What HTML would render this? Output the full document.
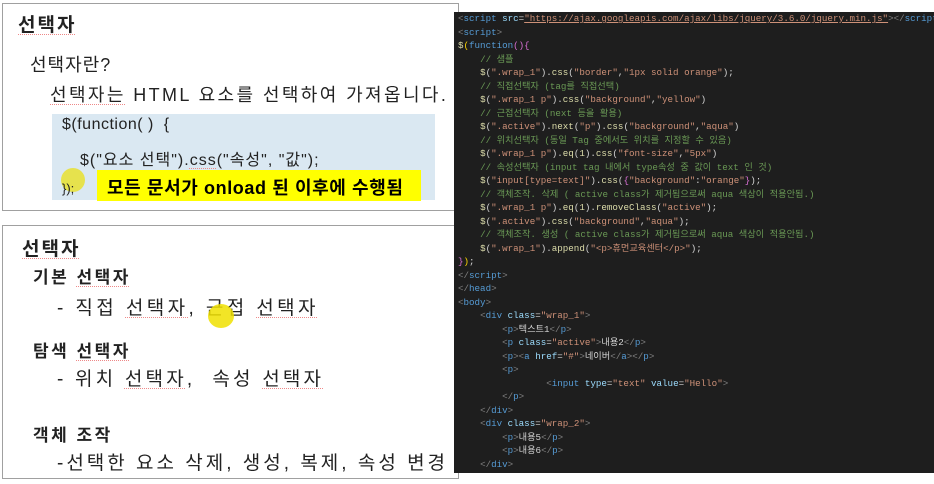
<!DOCTYPE html>
<html><head><meta charset="utf-8"><style>
body{margin:0;width:934px;height:484px;background:#fff;position:relative;overflow:hidden;font-family:"Liberation Sans","Noto Sans CJK KR",sans-serif;color:#222}
.box{position:absolute;border:1.5px solid #a0a0a0;background:#fff}
.t{position:absolute;white-space:nowrap}
.b{font-weight:bold}
.u{text-decoration:underline dotted #e88;text-decoration-thickness:1px;text-underline-offset:3px}
#code{position:absolute;left:454px;top:12px;width:480px;height:461px;background:#1e1e1e;overflow:hidden}
#code pre{margin:0;position:absolute;left:4px;top:0;font-family:"Liberation Mono","Noto Sans CJK KR",monospace;font-size:9.2px;line-height:13.5px;color:#d4d4d4}
.g{color:#808080}.k{color:#569cd6}.a{color:#9cdcfe}.s{color:#ce9178}.c{color:#6a9955}.f{color:#dcdcaa}.y{color:#ffd700}.p{color:#da70d6}.w{color:#d4d4d4}
</style></head><body>
<div class="box" style="left:2px;top:3px;width:455px;height:206px"></div>
<div class="t b" style="left:18px;top:10px;font-size:19px;letter-spacing:2px"><span class="u">선택자</span></div>
<div class="t" style="left:30px;top:51px;font-size:18px;letter-spacing:1px">선택자란?</div>
<div class="t" style="left:50px;top:81px;font-size:18px;letter-spacing:2.4px"><span class="u">선택자는</span> HTML 요소를 선택하여 가져옵니다.</div>
<div style="position:absolute;left:52px;top:114px;width:383px;height:86px;background:#dae8f2"></div>
<div class="t" style="left:62px;top:116px;font-size:16px;letter-spacing:0.5px">$(function( )&nbsp; {</div>
<div class="t" style="left:80px;top:146px;font-size:16px;letter-spacing:1px">$("요소 선택").<span class="u">css</span>("속성", "값");</div>
<div style="position:absolute;left:61px;top:168px;width:24px;height:24px;border-radius:50%;background:#e8e030;opacity:.85"></div>
<div class="t" style="left:62px;top:181px;font-size:13px">});</div>
<div style="position:absolute;left:97px;top:170px;width:324px;height:31px;background:#ffff00"></div>
<div class="t b" style="left:107px;top:174px;font-size:18px;letter-spacing:0.6px;color:#000">모든 문서가 onload 된 이후에 수행됨</div>

<div class="box" style="left:2px;top:225px;width:455px;height:252px"></div>
<div class="t b" style="left:22px;top:234px;font-size:19px;letter-spacing:2px"><span class="u">선택자</span></div>
<div class="t b" style="left:33px;top:263px;font-size:17px;letter-spacing:2.5px">기본 <span class="u">선택자</span></div>
<div class="t" style="left:57px;top:293px;font-size:19px;letter-spacing:3.4px">- 직접 <span class="u">선택자</span>, 근접 <span class="u">선택자</span></div>
<div style="position:absolute;left:208px;top:304px;width:26px;height:24px;border-radius:50%;background:#f0e000;opacity:.85"></div>
<div class="t b" style="left:33px;top:337px;font-size:17px;letter-spacing:2.5px">탐색 <span class="u">선택자</span></div>
<div class="t" style="left:57px;top:364px;font-size:19px;letter-spacing:3.2px">- 위치 <span class="u">선택자</span>,&nbsp; 속성 <span class="u">선택자</span></div>
<div class="t b" style="left:33px;top:421px;font-size:17px;letter-spacing:2.5px">객체 조작</div>
<div class="t" style="left:57px;top:448px;font-size:19px;letter-spacing:3px">-선택한 요소 삭제, 생성, 복제, 속성 변경</div>

<div id="code"><pre><span class="g">&lt;</span><span class="k">script</span> <span class="a">src</span>=<span class="s" style="text-decoration:underline">"https://ajax.googleapis.com/ajax/libs/jquery/3.6.0/jquery.min.js"</span><span class="g">&gt;&lt;/</span><span class="k">script</span><span class="g">&gt;</span>
<span class="g">&lt;</span><span class="k">script</span><span class="g">&gt;</span>
<span class="f">$</span><span class="y">(</span><span class="k">function</span><span class="p">(){</span>
    <span class="c">// 샘플</span>
    <span class="f">$</span>(<span class="s">".wrap_1"</span>).<span class="f">css</span>(<span class="s">"border"</span>,<span class="s">"1px solid orange"</span>);
    <span class="c">// 직접선택자 (tag를 직접선택)</span>
    <span class="f">$</span>(<span class="s">".wrap_1 p"</span>).<span class="f">css</span>(<span class="s">"background"</span>,<span class="s">"yellow"</span>)
    <span class="c">// 근접선택자 (next 등을 활용)</span>
    <span class="f">$</span>(<span class="s">".active"</span>).<span class="f">next</span>(<span class="s">"p"</span>).<span class="f">css</span>(<span class="s">"background"</span>,<span class="s">"aqua"</span>)
    <span class="c">// 위치선택자 (동일 Tag 중에서도 위치를 지정할 수 있음)</span>
    <span class="f">$</span>(<span class="s">".wrap_1 p"</span>).<span class="f">eq</span>(<span class="f">1</span>).<span class="f">css</span>(<span class="s">"font-size"</span>,<span class="s">"5px"</span>)
    <span class="c">// 속성선택자 (input tag 내에서 type속성 중 값이 text 인 것)</span>
    <span class="f">$</span>(<span class="s">"input[type=text]"</span>).<span class="f">css</span>(<span class="p">{</span><span class="s">"background"</span>:<span class="s">"orange"</span><span class="p">}</span>);
    <span class="c">// 객체조작. 삭제 ( active class가 제거됨으로써 aqua 색상이 적용안됨.)</span>
    <span class="f">$</span>(<span class="s">".wrap_1 p"</span>).<span class="f">eq</span>(<span class="f">1</span>).<span class="f">removeClass</span>(<span class="s">"active"</span>);
    <span class="f">$</span>(<span class="s">".active"</span>).<span class="f">css</span>(<span class="s">"background"</span>,<span class="s">"aqua"</span>);
    <span class="c">// 객체조작. 생성 ( active class가 제거됨으로써 aqua 색상이 적용안됨.)</span>
    <span class="f">$</span>(<span class="s">".wrap_1"</span>).<span class="f">append</span>(<span class="s">"&lt;p&gt;휴먼교육센터&lt;/p&gt;"</span>);
<span class="p">}</span><span class="y">)</span>;
<span class="g">&lt;/</span><span class="k">script</span><span class="g">&gt;</span>
<span class="g">&lt;/</span><span class="k">head</span><span class="g">&gt;</span>
<span class="g">&lt;</span><span class="k">body</span><span class="g">&gt;</span>
    <span class="g">&lt;</span><span class="k">div</span> <span class="a">class</span>=<span class="s">"wrap_1"</span><span class="g">&gt;</span>
        <span class="g">&lt;</span><span class="k">p</span><span class="g">&gt;</span>텍스트1<span class="g">&lt;/</span><span class="k">p</span><span class="g">&gt;</span>
        <span class="g">&lt;</span><span class="k">p</span> <span class="a">class</span>=<span class="s">"active"</span><span class="g">&gt;</span>내용2<span class="g">&lt;/</span><span class="k">p</span><span class="g">&gt;</span>
        <span class="g">&lt;</span><span class="k">p</span><span class="g">&gt;&lt;</span><span class="k">a</span> <span class="a">href</span>=<span class="s">"#"</span><span class="g">&gt;</span>네이버<span class="g">&lt;/</span><span class="k">a</span><span class="g">&gt;&lt;/</span><span class="k">p</span><span class="g">&gt;</span>
        <span class="g">&lt;</span><span class="k">p</span><span class="g">&gt;</span>
                <span class="g">&lt;</span><span class="k">input</span> <span class="a">type</span>=<span class="s">"text"</span> <span class="a">value</span>=<span class="s">"Hello"</span><span class="g">&gt;</span>
        <span class="g">&lt;/</span><span class="k">p</span><span class="g">&gt;</span>
    <span class="g">&lt;/</span><span class="k">div</span><span class="g">&gt;</span>
    <span class="g">&lt;</span><span class="k">div</span> <span class="a">class</span>=<span class="s">"wrap_2"</span><span class="g">&gt;</span>
        <span class="g">&lt;</span><span class="k">p</span><span class="g">&gt;</span>내용5<span class="g">&lt;/</span><span class="k">p</span><span class="g">&gt;</span>
        <span class="g">&lt;</span><span class="k">p</span><span class="g">&gt;</span>내용6<span class="g">&lt;/</span><span class="k">p</span><span class="g">&gt;</span>
    <span class="g">&lt;/</span><span class="k">div</span><span class="g">&gt;</span>
    <span class="g">&lt;</span><span class="k">div</span> <span class="a">class</span>=<span class="s">"wrap_3"</span><span class="g">&gt;</span></pre></div>
</body></html>
